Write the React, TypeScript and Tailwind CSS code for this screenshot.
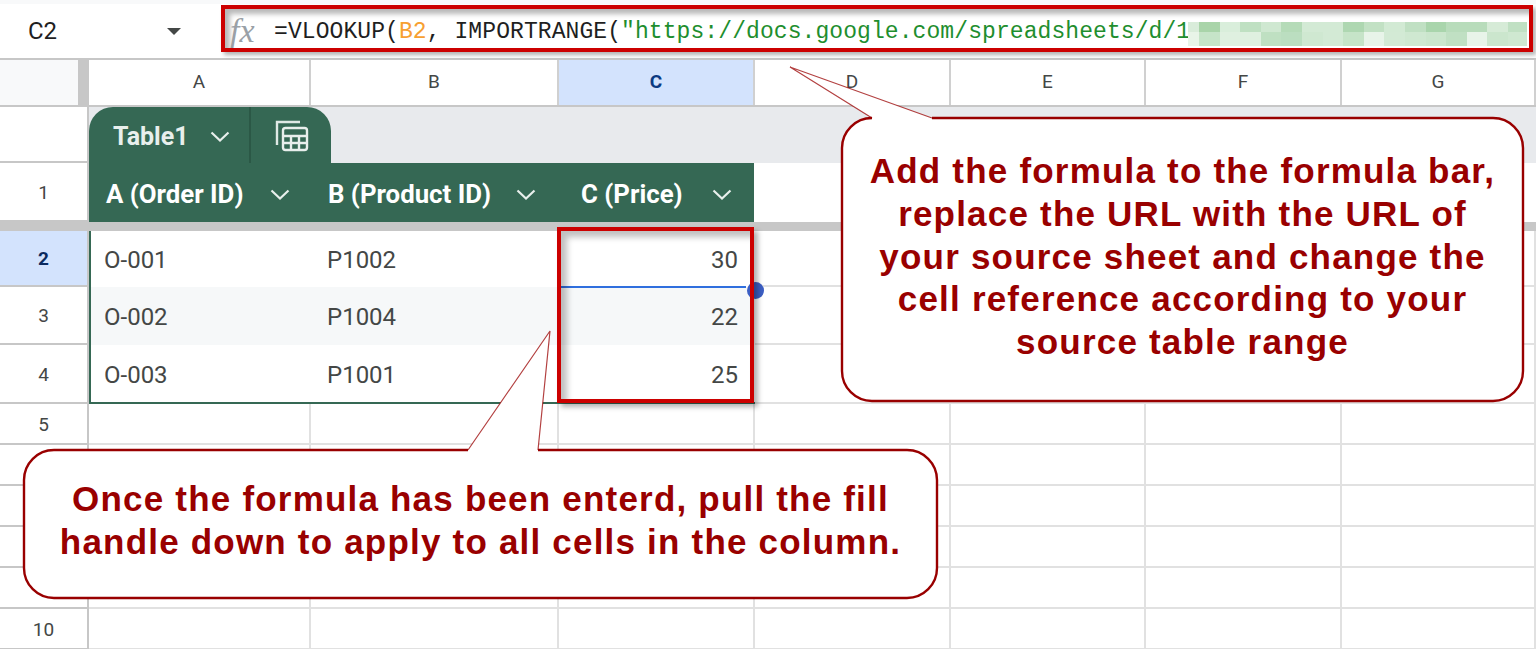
const COLS = ["A", "B", "C", "D", "E", "F", "G"];

const CELL_WIDTHS = ["w-[222px]", "w-[248px]", "w-[196px]", "w-[196px]", "w-[195px]", "w-[196px]", "w-[194px]"];

const BLUR_TOP = [
  "w-[11px] bg-[#d9ecda]", "w-[21px] bg-[#a9d4a9]", "w-[20px] bg-[#d9eedb]", "w-[21px] bg-[#bfe0c2]", "w-[20px] bg-[#cfe8d1]", "w-[21px] bg-[#b5dbb8]",
  "w-[21px] bg-[#d3ead5]", "w-[20px] bg-[#d3ead5]", "w-[21px] bg-[#aed7b1]", "w-[20px] bg-[#c2e1c4]", "w-[21px] bg-[#d2ead4]", "w-[21px] bg-[#c0e0c3]",
  "w-[20px] bg-[#a9d5ac]", "w-[21px] bg-[#b8dcbb]", "w-[20px] bg-[#b8dcbb]", "w-[21px] bg-[#d6ebd7]", "w-[19px] bg-[#c0e0c3]",
];

const BLUR_BOTTOM = [
  "w-[11px] bg-[#e8f4e8]", "w-[21px] bg-[#c6e4c8]", "w-[20px] bg-[#dff0e0]", "w-[21px] bg-[#dff0e0]", "w-[20px] bg-[#bfe0c2]", "w-[21px] bg-[#bbdec0]",
  "w-[21px] bg-[#cfe8d1]", "w-[20px] bg-[#d3ead5]", "w-[21px] bg-[#c6e4c8]", "w-[20px] bg-[#e8f4e9]", "w-[21px] bg-[#d3ead5]", "w-[21px] bg-[#cfe8d1]",
  "w-[20px] bg-[#cbe6cd]", "w-[21px] bg-[#c0e0c3]", "w-[20px] bg-[#e8f4e9]", "w-[21px] bg-[#cbe6cd]", "w-[19px] bg-[#cfe8d1]",
];

const TABLE_ROWS = [
  { row: 2, id: "O-001", product: "P1002", price: 30, height: "h-[56px]", bg: "bg-white", selected: true },
  { row: 3, id: "O-002", product: "P1004", price: 22, height: "h-[58px]", bg: "bg-[#f6f8f9]", selected: false },
  { row: 4, id: "O-003", product: "P1001", price: 25, height: "h-[59px]", bg: "bg-white", selected: false },
];

function Chevron({ className }: { className: string }) {
  return (
    <svg className={className} width="20" height="11" viewBox="0 0 20 11" fill="none">
      <path d="M1.5 1.5 10 9.5l8.5-8" stroke="#e8efec" strokeWidth="2.2" />
    </svg>
  );
}

function CalculatorIcon() {
  return (
    <svg width="34" height="34" viewBox="0 0 34 34" fill="none" className="ml-[24px] mt-[12px]">
      <path d="M2 26V3h23" stroke="#dfe9e5" strokeWidth="2.4" />
      <rect x="8" y="9" width="24" height="22" rx="2.5" stroke="#e8efec" strokeWidth="2.4" />
      <path d="M8 17h24M8 24h24M16 17v14M24 17v14" stroke="#e8efec" strokeWidth="2.4" />
    </svg>
  );
}

function RowHead({ children, active, className }: { children?: React.ReactNode; active?: boolean; className: string }) {
  return (
    <div
      className={`w-[89px] shrink-0 flex items-center justify-center pt-[3px] border-r-2 border-b-2 border-[#c7c7c7] text-[19px] ${
        active ? "bg-[#d3e3fd] font-bold text-[#0b2a5e]" : "bg-white text-[#444746]"
      } ${className}`}
    >
      {children}
    </div>
  );
}

function EmptyRow({ row, height }: { row: number | string; height: string }) {
  return (
    <div className="flex">
      <RowHead className={height}>{row}</RowHead>
      {CELL_WIDTHS.map((w) => (
        <div key={w + row} className={`${w} ${height} shrink-0 border-r-2 border-b-2 border-[#e1e1e1]`} />
      ))}
    </div>
  );
}

export default function App() {
  return (
    <div className="relative w-[1536px] h-[649px] overflow-hidden bg-white font-['Roboto',sans-serif]">
      <div className="h-[4px] bg-[#f8f9fa]" />

      {/* formula bar */}
      <div className="h-[56px] flex items-center border-b-2 border-[#c7c7c7]">
        <div className="w-[221px] shrink-0 flex items-center pl-[28px]">
          <span className="text-[24px] text-[#1f1f1f] w-[139px]">C2</span>
          <span className="w-0 h-0 border-x-[7px] border-x-transparent border-t-[7px] border-t-[#444746]" />
        </div>
        <div className="w-[1312px] h-[47px] -mt-[5px] flex items-center overflow-hidden border-4 border-[#cc0000] bg-white shadow-[inset_5px_5px_5px_rgba(0,0,0,0.28),3px_3px_4px_rgba(0,0,0,0.3)]">
          <span className="font-['Liberation_Serif',serif] italic text-[34px] text-[#9aa0a6] w-[49px] pl-[5px] mt-[4px] shrink-0 leading-none">fx</span>
          <span className="font-['Liberation_Mono',monospace] text-[23px] mt-[8px] tracking-[0.08px] whitespace-pre text-[#1f1f1f] shrink-0 font-medium">
            =VLOOKUP(<span className="text-[#f7a031]">B2</span>, IMPORTRANGE(<span className="text-[#1e8e2e]">"https://docs.google.com/spreadsheets/d/1</span>
          </span>
          <div className="shrink-0 mt-[11px] -ml-[2px]">
            <div className="flex h-[10px]">
              {BLUR_TOP.map((c, i) => (
                <div key={i} className={c} />
              ))}
            </div>
            <div className="flex h-[14px]">
              {BLUR_BOTTOM.map((c, i) => (
                <div key={i} className={c} />
              ))}
            </div>
          </div>
        </div>
      </div>

      {/* column letters */}
      <div className="flex h-[47px] border-b-2 border-[#c7c7c7]">
        <div className="w-[78px] shrink-0 bg-[#f8f9fa]" />
        <div className="w-[11px] shrink-0 bg-[#c7c7c7]" />
        {COLS.map((c, i) => (
          <div
            key={c}
            className={`${CELL_WIDTHS[i]} shrink-0 flex items-center justify-center border-r-2 border-[#d0d0d0] text-[19px] ${
              c === "C" ? "bg-[#d3e3fd] font-bold text-[#0b3a82]" : "text-[#444746]"
            }`}
          >
            {c}
          </div>
        ))}
      </div>

      {/* table name band */}
      <div className="flex h-[56px]">
        <RowHead className="h-[56px]" />
        <div className="flex-1 bg-[#e8eaed]">
          <div className="flex w-[242px] h-[56px] bg-[#356854] rounded-t-[24px] text-[#e8efec]">
            <div className="w-[162px] flex items-center pl-[24px] pt-[3px] border-r-2 border-[#2b5846] text-[25px] font-bold">
              <span className="w-[97px]">Table1</span>
              <Chevron className="shrink-0" />
            </div>
            <CalculatorIcon />
          </div>
        </div>
      </div>

      {/* table header */}
      <div className="flex h-[59px]">
        <RowHead className="h-[59px]">1</RowHead>
        <div className="w-[665px] shrink-0 flex items-center pt-[3px] bg-[#356854] text-white text-[25.8px] font-bold">
          <span className="ml-[17px] w-[164px] shrink-0 whitespace-nowrap">A (Order ID)</span>
          <Chevron className="shrink-0" />
          <span className="ml-[38px] w-[188px] shrink-0 whitespace-nowrap">B (Product ID)</span>
          <Chevron className="shrink-0" />
          <span className="ml-[45px] w-[131px] shrink-0 whitespace-nowrap">C (Price)</span>
          <Chevron className="shrink-0" />
        </div>
        <div className="flex-1 bg-white" />
      </div>

      {/* frozen rows divider */}
      <div className="h-[9px] bg-[#c7c7c7]" />

      {/* table body */}
      {TABLE_ROWS.map((r) => (
        <div key={r.row} className="flex">
          <RowHead className={r.height} active={r.selected}>{r.row}</RowHead>
          <div className={`w-[666px] shrink-0 flex items-center pt-[2px] border-l-2 border-[#356854] ${r.height} ${r.bg} ${r.row === 4 ? "border-b-2" : ""} text-[24px] text-[#444746]`}>
            <span className="ml-[13px] w-[223px]">{r.id}</span>
            <span className="w-[231px]">{r.product}</span>
            <span className="w-[180px] text-right">{r.price}</span>
          </div>
          {CELL_WIDTHS.slice(3).map((w) => (
            <div key={w + r.row} className={`${w} ${r.height} shrink-0 border-r-2 border-b-2 border-[#e1e1e1]`} />
          ))}
        </div>
      ))}

      <EmptyRow row={5} height="h-[41px]" />
      <EmptyRow row={6} height="h-[41px]" />
      <EmptyRow row={7} height="h-[41px]" />
      <EmptyRow row={8} height="h-[41px]" />
      <EmptyRow row={9} height="h-[41px]" />
      <EmptyRow row={10} height="h-[41px]" />

      {/* annotations on top of the sheet */}
      <div className="absolute left-[558px] top-[286px] w-[188px] h-[2px] bg-[#2f6fde]" />
      <div className="absolute left-[747px] top-[282px] w-[17px] h-[17px] rounded-full bg-[#3c5fc4]" />
      <div className="absolute left-[557px] top-[227px] w-[197px] h-[176px] border-4 border-[#cc0000] shadow-[inset_6px_6px_6px_rgba(0,0,0,0.25),4px_4px_5px_rgba(0,0,0,0.3)]" />

      <svg className="absolute left-0 top-0 pointer-events-none" width="1536" height="649" viewBox="0 0 1536 649" fill="none">
        <path d="M932 118H1493a30 30 0 0 1 30 30V371a30 30 0 0 1-30 30H872a30 30 0 0 1-30-30V148a30 30 0 0 1 30-30L790 67Z" fill="#fff" />
        <path d="M932 118H1493a30 30 0 0 1 30 30V371a30 30 0 0 1-30 30H872a30 30 0 0 1-30-30V148a30 30 0 0 1 30-30" stroke="#990000" strokeWidth="2.4" />
        <path d="M872 118 790 67 932 118" stroke="#990000" strokeWidth="1.2" strokeOpacity="0.75" />
        <path d="M538 450H907a30 30 0 0 1 30 30V568a30 30 0 0 1-30 30H54a30 30 0 0 1-30-30V480a30 30 0 0 1 30-30H468L550 331Z" fill="#fff" />
        <path d="M538 450H907a30 30 0 0 1 30 30V568a30 30 0 0 1-30 30H54a30 30 0 0 1-30-30V480a30 30 0 0 1 30-30H468" stroke="#990000" strokeWidth="2.4" />
        <path d="M468 450 550 331 538 450" stroke="#990000" strokeWidth="1.2" strokeOpacity="0.75" />
      </svg>

      <div className="absolute left-[842px] top-[150px] w-[681px] text-center font-['Liberation_Sans',sans-serif] font-bold text-[35px] leading-[42.8px] tracking-[1.2px] text-[#990000]">
        <div>Add the formula to the formula bar,</div>
        <div>replace the URL with the URL of</div>
        <div>your source sheet and change the</div>
        <div>cell reference according to your</div>
        <div>source table range</div>
      </div>
      <div className="absolute left-[24px] top-[477px] w-[913px] text-center font-['Liberation_Sans',sans-serif] font-bold text-[35px] leading-[43px] tracking-[1.2px] text-[#990000]">
        <div>Once the formula has been enterd, pull the fill</div>
        <div>handle down to apply to all cells in the column.</div>
      </div>
    </div>
  );
}
